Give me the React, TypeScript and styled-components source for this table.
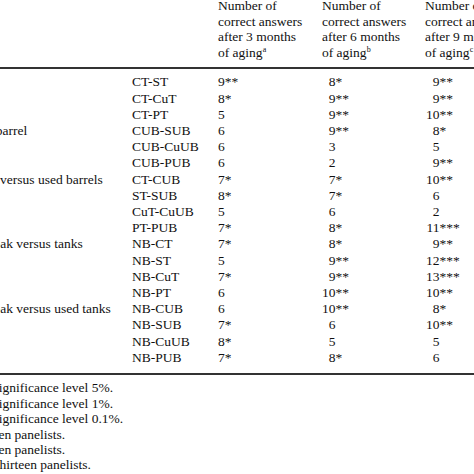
import React from "react";
import styled, { createGlobalStyle } from "styled-components";

const GlobalStyle = createGlobalStyle`
  html, body {
    margin: 0;
    padding: 0;
    background: #ffffff;
    overflow: hidden;
  }
  body {
    font-family: "Liberation Serif", "Times New Roman", serif;
    color: #111111;
  }
`;

const COLS = "166.4px 86px 104px 103px 150px";

const Page = styled.div`
  width: 474px;
  height: 474px;
  overflow: hidden;
`;

const Sheet = styled.div`
  width: 614px;
  margin: -2.2px 0 0 -34.4px;
  font-size: 13.5px;
`;

const HeaderRow = styled.div`
  display: grid;
  grid-template-columns: ${COLS};
  line-height: 15.8px;
  padding-bottom: 6px;
  border-bottom: 2px solid #333333;
`;

const HeadCell = styled.div`
  white-space: nowrap;
`;

const Sup = styled.sup`
  font-size: 8px;
  line-height: 0;
  vertical-align: 5px;
`;

const Body = styled.div`
  padding: 5.4px 0 6.5px;
  border-bottom: 2px solid #333333;
`;

const DataRow = styled.div`
  display: grid;
  grid-template-columns: ${COLS};
  line-height: 16.2px;
  white-space: nowrap;
`;

const GroupLabel = styled.div`
  white-space: nowrap;
  margin-left: -1px;
`;

const Pair = styled.div``;

const Value = styled.div<{ $pad: number }>`
  padding-left: ${(p) => p.$pad}px;
`;

const Num = styled.span<{ $digits: number }>`
  display: inline-block;
  width: ${(p) => p.$digits * 0.5}em;
  text-align: right;
`;

const Stars = styled.span``;

const Notes = styled.div`
  padding-top: 5.8px;
  line-height: 15.4px;
`;

const Note = styled.div`
  display: grid;
  grid-template-columns: 25.6px auto;
  white-space: nowrap;
`;

const Marker = styled.span`
  text-align: right;
  padding-right: 1px;
`;

const NoteSup = styled.span`
  font-size: 8px;
  vertical-align: 5px;
  line-height: 0;
`;

type Row = { group?: string; pair: string; v: [string, string, string] };

const rows: Row[] = [
  { group: "Tanks", pair: "CT-ST", v: ["9**", "8*", "9**"] },
  { pair: "CT-CuT", v: ["8*", "9**", "9**"] },
  { pair: "CT-PT", v: ["5", "9**", "10**"] },
  { group: "Used barrel", pair: "CUB-SUB", v: ["6", "9**", "8*"] },
  { pair: "CUB-CuUB", v: ["6", "3", "5"] },
  { pair: "CUB-PUB", v: ["6", "2", "9**"] },
  { group: "Tanks versus used barrels", pair: "CT-CUB", v: ["7*", "7*", "10**"] },
  { pair: "ST-SUB", v: ["8*", "7*", "6"] },
  { pair: "CuT-CuUB", v: ["5", "6", "2"] },
  { pair: "PT-PUB", v: ["7*", "8*", "11***"] },
  { group: "New oak versus tanks", pair: "NB-CT", v: ["7*", "8*", "9**"] },
  { pair: "NB-ST", v: ["5", "9**", "12***"] },
  { pair: "NB-CuT", v: ["7*", "9**", "13***"] },
  { pair: "NB-PT", v: ["6", "10**", "10**"] },
  { group: "New oak versus used tanks", pair: "NB-CUB", v: ["6", "10**", "8*"] },
  { pair: "NB-SUB", v: ["7*", "6", "10**"] },
  { pair: "NB-CuUB", v: ["8*", "5", "5"] },
  { pair: "NB-PUB", v: ["7*", "8*", "6"] },
];

const valueCols = [
  { pad: 0, digits: 1 },
  { pad: -0.4, digits: 2 },
  { pad: 0.9, digits: 2 },
];

const Cell: React.FC<{ text: string; pad: number; digits: number }> = ({ text, pad, digits }) => {
  const m = text.match(/^(\d+)(\**)$/);
  const num = m ? m[1] : text;
  const stars = m ? m[2] : "";
  return (
    <Value $pad={pad}>
      <Num $digits={digits}>{num}</Num>
      <Stars>{stars}</Stars>
    </Value>
  );
};

const headers = [
  { months: "3", mark: "a" },
  { months: "6", mark: "b" },
  { months: "9", mark: "c" },
];

const notes: { marker: React.ReactNode; text: string }[] = [
  { marker: "*", text: "Significance level 5%." },
  { marker: "**", text: "Significance level 1%." },
  { marker: "***", text: "Significance level 0.1%." },
  { marker: <NoteSup>a</NoteSup>, text: "Ten panelists." },
  { marker: <NoteSup>b</NoteSup>, text: "Ten panelists." },
  { marker: <NoteSup>c</NoteSup>, text: "Thirteen panelists." },
];

export default function App() {
  return (
    <Page>
      <GlobalStyle />
      <Sheet>
        <HeaderRow>
          <HeadCell />
          <HeadCell />
          {headers.map((h) => (
            <HeadCell key={h.mark}>
              Number of
              <br />
              correct answers
              <br />
              after {h.months} months
              <br />
              of aging<Sup>{h.mark}</Sup>
            </HeadCell>
          ))}
          <HeadCell />
        </HeaderRow>
        <Body>
          {rows.map((r) => (
            <DataRow key={r.pair}>
              <GroupLabel>{r.group ?? ""}</GroupLabel>
              <Pair>{r.pair}</Pair>
              {r.v.map((t, i) => (
                <Cell key={i} text={t} pad={valueCols[i].pad} digits={valueCols[i].digits} />
              ))}
              <div />
            </DataRow>
          ))}
        </Body>
        <Notes>
          {notes.map((n, i) => (
            <Note key={i}>
              <Marker>{n.marker}</Marker>
              <span>{n.text}</span>
            </Note>
          ))}
        </Notes>
      </Sheet>
    </Page>
  );
}
